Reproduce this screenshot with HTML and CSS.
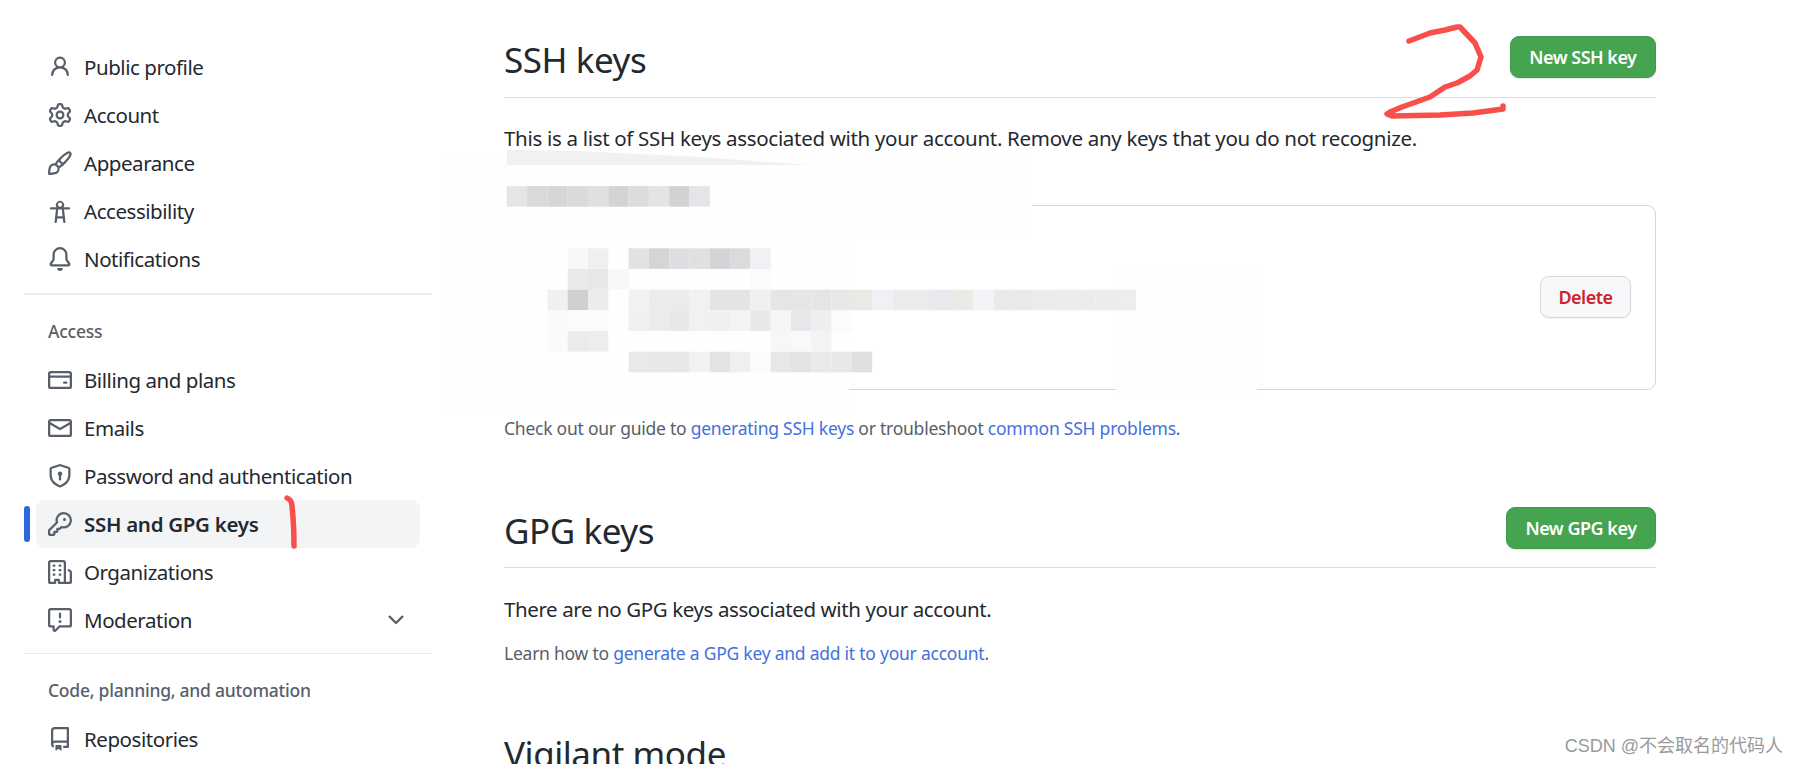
FILE: index.html
```html
<!DOCTYPE html>
<html lang="en">
<head>
<meta charset="utf-8">
<title>SSH and GPG keys</title>
<link rel="stylesheet" href="styles.css">
</head>
<body>
<div class="page">
  <nav class="sidebar">
    <ul class="menu">
      <li class="item"><svg class="icon" viewBox="0 0 16 16"><path d="M10.561 8.073a6.005 6.005 0 0 1 3.432 5.142.75.75 0 1 1-1.498.07 4.5 4.5 0 0 0-8.99 0 .75.75 0 1 1-1.498-.07 6.004 6.004 0 0 1 3.431-5.142 3.999 3.999 0 1 1 5.123 0ZM10.5 5a2.5 2.5 0 1 0-5 0 2.5 2.5 0 0 0 5 0Z"/></svg><span>Public profile</span></li>
      <li class="item"><svg class="icon" viewBox="0 0 16 16"><path d="M8 0a8.2 8.2 0 0 1 .701.031C9.444.095 9.99.645 10.16 1.29l.288 1.107c.018.066.079.158.212.224.231.114.454.243.668.386.123.082.233.09.299.071l1.103-.303c.644-.176 1.392.021 1.82.63.27.385.506.792.704 1.218.315.675.111 1.422-.364 1.891l-.814.806c-.049.048-.098.147-.088.294.016.257.016.515 0 .772-.01.147.038.246.088.294l.814.806c.475.469.679 1.216.364 1.891a7.977 7.977 0 0 1-.704 1.217c-.428.61-1.176.807-1.82.63l-1.102-.302c-.067-.019-.177-.011-.3.071a5.909 5.909 0 0 1-.668.386c-.133.066-.194.158-.211.224l-.29 1.106c-.168.646-.715 1.196-1.458 1.26a8.006 8.006 0 0 1-1.402 0c-.743-.064-1.289-.614-1.458-1.26l-.289-1.106c-.018-.066-.079-.158-.212-.224a5.738 5.738 0 0 1-.668-.386c-.123-.082-.233-.09-.299-.071l-1.103.303c-.644.176-1.392-.021-1.82-.63a8.12 8.12 0 0 1-.704-1.218c-.315-.675-.111-1.422.363-1.891l.815-.806c.05-.048.098-.147.088-.294a6.214 6.214 0 0 1 0-.772c.01-.147-.038-.246-.088-.294l-.815-.806C.635 6.045.431 5.298.746 4.623a7.92 7.92 0 0 1 .704-1.217c.428-.61 1.176-.807 1.82-.63l1.102.302c.067.019.177.011.3-.071.214-.143.437-.272.668-.386.133-.066.194-.158.211-.224l.29-1.106C6.009.645 6.556.095 7.299.03 7.53.01 7.764 0 8 0Zm-.571 1.525c-.036.003-.108.036-.137.146l-.289 1.105c-.147.561-.549.967-.998 1.189-.173.086-.34.183-.5.29-.417.278-.97.423-1.529.27l-1.103-.303c-.109-.03-.175.016-.195.045-.22.312-.412.644-.573.99-.014.031-.021.11.059.19l.815.806c.411.406.562.957.53 1.456a4.709 4.709 0 0 0 0 .582c.032.499-.119 1.05-.53 1.456l-.815.806c-.081.08-.073.159-.059.19.162.346.353.677.573.989.02.03.085.076.195.046l1.102-.303c.56-.153 1.113-.008 1.53.27.161.107.328.204.501.29.447.222.85.629.997 1.189l.289 1.105c.029.109.101.143.137.146a6.6 6.6 0 0 0 1.142 0c.036-.003.108-.036.137-.146l.289-1.105c.147-.561.549-.967.998-1.189.173-.086.34-.183.5-.29.417-.278.97-.423 1.529-.27l1.103.303c.109.029.175-.016.195-.045.22-.313.411-.644.573-.99.014-.031.021-.11-.059-.19l-.815-.806c-.411-.406-.562-.957-.53-1.456a4.709 4.709 0 0 0 0-.582c-.032-.499.119-1.05.53-1.456l.815-.806c.081-.08.073-.159.059-.19a6.464 6.464 0 0 0-.573-.989c-.02-.03-.085-.076-.195-.046l-1.102.303c-.56.153-1.113.008-1.53-.27a4.44 4.44 0 0 0-.501-.29c-.447-.222-.85-.629-.997-1.189l-.289-1.105c-.029-.11-.101-.143-.137-.146a6.6 6.6 0 0 0-1.142 0ZM11 8a3 3 0 1 1-6 0 3 3 0 0 1 6 0ZM9.5 8a1.5 1.5 0 1 0-3.001.001A1.5 1.5 0 0 0 9.5 8Z"/></svg><span>Account</span></li>
      <li class="item"><svg class="icon" viewBox="0 0 16 16"><path d="M11.134 1.535c.7-.509 1.416-.942 2.076-1.155.649-.21 1.463-.267 2.069.34.603.601.568 1.411.368 2.07-.202.668-.624 1.39-1.125 2.096-1.011 1.424-2.496 2.987-3.775 4.249-1.098 1.084-2.132 1.839-3.04 2.3a3.744 3.744 0 0 1-1.055 3.217c-.431.431-1.065.691-1.657.861-.614.177-1.294.287-1.914.357A21.151 21.151 0 0 1 .797 16H.743l.007-.75H.749L.742 16a.75.75 0 0 1-.743-.742l.743-.008-.742.007v-.054a21.25 21.25 0 0 1 .13-2.284c.067-.647.187-1.287.358-1.914.17-.591.43-1.226.86-1.657a3.746 3.746 0 0 1 3.227-1.054c.466-.893 1.225-1.907 2.314-2.982 1.271-1.255 2.833-2.75 4.245-3.777ZM1.62 13.089c-.051.464-.086.929-.104 1.395.466-.018.932-.053 1.396-.104a10.511 10.511 0 0 0 1.668-.309c.526-.151.856-.325 1.011-.48a2.25 2.25 0 1 0-3.182-3.182c-.155.155-.329.485-.48 1.01a10.515 10.515 0 0 0-.309 1.67Zm10.396-10.34c-1.224.89-2.605 2.189-3.822 3.384l1.718 1.718c1.21-1.205 2.51-2.597 3.387-3.833.47-.662.78-1.227.912-1.662.134-.444.032-.551.009-.575h-.001V1.78c-.014-.014-.113-.113-.548.027-.432.14-.995.462-1.655.942Zm-4.832 7.266-.001.001a9.859 9.859 0 0 0 1.63-1.142L7.155 7.216a9.7 9.7 0 0 0-1.161 1.607c.482.302.889.71 1.19 1.192Z"/></svg><span>Appearance</span></li>
      <li class="item"><svg class="icon" viewBox="0 0 16 16"><path fill-rule="evenodd" d="M10.3 5.5H14a.75.75 0 0 1 0 1.5h-3.3l.94 8.16a.75.75 0 0 1-1.49.18L9.8 13H6.2l-.35 2.34a.75.75 0 0 1-1.49-.18L5.3 7H2a.75.75 0 0 1 0-1.5h3.7A2.75 2.75 0 1 1 10.3 5.5ZM8 5.1a1.35 1.35 0 1 0 0-2.7 1.35 1.35 0 0 0 0 2.7ZM6.75 7l-.4 4.5h3.3L9.25 7Z"/></svg><span>Accessibility</span></li>
      <li class="item"><svg class="icon" viewBox="0 0 16 16"><path d="M8 16c.9 0 1.7-.6 1.9-1.5.1-.3-.1-.5-.4-.5h-3c-.3 0-.5.2-.4.5.2.9 1 1.5 1.9 1.5ZM3 5a5 5 0 0 1 10 0v2.947c0 .05.015.098.042.139l1.703 2.555A1.519 1.519 0 0 1 13.482 13H2.518a1.516 1.516 0 0 1-1.263-2.36l1.703-2.554A.255.255 0 0 0 3 7.947Zm5-3.5A3.5 3.5 0 0 0 4.5 5v2.947c0 .346-.102.683-.294.97l-1.703 2.556a.017.017 0 0 0-.003.01l.001.006c0 .002.002.004.004.006l.006.004.007.001h10.964l.007-.001.006-.004.004-.006.001-.007a.017.017 0 0 0-.003-.01l-1.703-2.554a1.745 1.745 0 0 1-.294-.97V5A3.5 3.5 0 0 0 8 1.5Z"/></svg><span>Notifications</span></li>
    </ul>
    <hr class="rule">
    <h3 class="label">Access</h3>
    <ul class="menu">
      <li class="item"><svg class="icon" viewBox="0 0 16 16"><path d="M10.75 9a.75.75 0 0 0 0 1.5h1.5a.75.75 0 0 0 0-1.5h-1.5ZM0 3.75C0 2.784.784 2 1.75 2h12.5c.966 0 1.75.784 1.75 1.75v8.5A1.75 1.75 0 0 1 14.25 14H1.75A1.75 1.75 0 0 1 0 12.25ZM14.5 6.5h-13v5.75c0 .138.112.25.25.25h12.5a.25.25 0 0 0 .25-.25Zm0-2.75a.25.25 0 0 0-.25-.25H1.75a.25.25 0 0 0-.25.25V5h13Z"/></svg><span>Billing and plans</span></li>
      <li class="item"><svg class="icon" viewBox="0 0 16 16"><path d="M1.75 2h12.5c.966 0 1.75.784 1.75 1.75v8.5A1.75 1.75 0 0 1 14.25 14H1.75A1.75 1.75 0 0 1 0 12.25v-8.5C0 2.784.784 2 1.75 2ZM1.5 12.251c0 .138.112.25.25.25h12.5a.25.25 0 0 0 .25-.25V5.809L8.38 9.397a.75.75 0 0 1-.76 0L1.5 5.809v6.442Zm13-8.181v-.32a.25.25 0 0 0-.25-.25H1.75a.25.25 0 0 0-.25.25v.32L8 7.88Z"/></svg><span>Emails</span></li>
      <li class="item"><svg class="icon" viewBox="0 0 16 16"><path d="m8.533.133 5.25 1.68A1.75 1.75 0 0 1 15 3.48V7c0 1.566-.32 3.182-1.303 4.682-.983 1.498-2.585 2.813-5.032 3.855a1.697 1.697 0 0 1-1.33 0c-2.447-1.042-4.049-2.357-5.032-3.855C1.32 10.182 1 8.566 1 7V3.48a1.75 1.75 0 0 1 1.217-1.667l5.25-1.68a1.748 1.748 0 0 1 1.066 0Zm-.61 1.429.001.001-5.25 1.68a.251.251 0 0 0-.174.237V7c0 1.36.275 2.666 1.057 3.859.784 1.194 2.121 2.342 4.366 3.298a.196.196 0 0 0 .154 0c2.245-.957 3.582-2.103 4.366-3.297C13.225 9.666 13.5 8.358 13.5 7V3.48a.25.25 0 0 0-.174-.238l-5.25-1.68a.25.25 0 0 0-.153 0ZM9.5 6.5c0 .536-.286 1.032-.75 1.3v2.45a.75.75 0 0 1-1.5 0V7.8A1.5 1.5 0 1 1 9.5 6.5Z"/></svg><span>Password and authentication</span></li>
      <li class="item active"><svg class="icon" viewBox="0 0 16 16"><path d="M10.5 0a5.499 5.499 0 1 1-1.288 10.848l-.932.932a.749.749 0 0 1-.53.22H7v.75a.749.749 0 0 1-.22.53l-.5.5a.749.749 0 0 1-.53.22H5v.75a.749.749 0 0 1-.22.53l-.5.5a.749.749 0 0 1-.53.22h-2A1.75 1.75 0 0 1 0 14.25v-2c0-.199.079-.389.22-.53l4.932-4.932A5.5 5.5 0 0 1 10.5 0Zm-4 5.5c-.001.431.069.86.205 1.269a.75.75 0 0 1-.181.768L1.5 12.56v1.69c0 .138.112.25.25.25h1.69l.06-.06v-1.19a.75.75 0 0 1 .75-.75h1.19l.06-.06v-1.19a.75.75 0 0 1 .75-.75h1.19l1.023-1.025a.75.75 0 0 1 .768-.18A4 4 0 1 0 6.5 5.5ZM11 6a1 1 0 1 1 0-2 1 1 0 0 1 0 2Z"/></svg><span>SSH and GPG keys</span></li>
      <li class="item"><svg class="icon" viewBox="0 0 16 16"><path d="M1.75 16A1.75 1.75 0 0 1 0 14.25V1.75C0 .784.784 0 1.75 0h8.5C11.216 0 12 .784 12 1.75v12.5c0 .085-.006.168-.018.25h2.268a.25.25 0 0 0 .25-.25V8.285a.25.25 0 0 0-.111-.208l-1.055-.703a.749.749 0 1 1 .832-1.248l1.055.703c.487.325.779.871.779 1.456v5.965A1.75 1.75 0 0 1 14.25 16h-3.5a.766.766 0 0 1-.197-.026c-.099.017-.2.026-.303.026h-3a.75.75 0 0 1-.75-.75V14h-1v1.25a.75.75 0 0 1-.75.75Zm-.25-1.75c0 .138.112.25.25.25H4v-1.25a.75.75 0 0 1 .75-.75h2.5a.75.75 0 0 1 .75.75v1.25h2.25a.25.25 0 0 0 .25-.25V1.75a.25.25 0 0 0-.25-.25h-8.5a.25.25 0 0 0-.25.25ZM3.75 6h.5a.75.75 0 0 1 0 1.5h-.5a.75.75 0 0 1 0-1.5ZM3 3.75A.75.75 0 0 1 3.75 3h.5a.75.75 0 0 1 0 1.5h-.5A.75.75 0 0 1 3 3.75Zm4 3A.75.75 0 0 1 7.75 6h.5a.75.75 0 0 1 0 1.5h-.5A.75.75 0 0 1 7 6.75ZM7.75 3h.5a.75.75 0 0 1 0 1.5h-.5a.75.75 0 0 1 0-1.5ZM3 9.75A.75.75 0 0 1 3.75 9h.5a.75.75 0 0 1 0 1.5h-.5A.75.75 0 0 1 3 9.75ZM7.75 9h.5a.75.75 0 0 1 0 1.5h-.5a.75.75 0 0 1 0-1.5Z"/></svg><span>Organizations</span></li>
      <li class="item"><svg class="icon" viewBox="0 0 16 16"><path d="M0 1.75C0 .784.784 0 1.75 0h12.5C15.216 0 16 .784 16 1.75v9.5A1.75 1.75 0 0 1 14.25 13H8.06l-2.573 2.573A1.458 1.458 0 0 1 3 14.543V13H1.75A1.75 1.75 0 0 1 0 11.25Zm1.75-.25a.25.25 0 0 0-.25.25v9.5c0 .138.112.25.25.25h2a.75.75 0 0 1 .75.75v2.19l2.72-2.72a.749.749 0 0 1 .53-.22h6.5a.25.25 0 0 0 .25-.25v-9.5a.25.25 0 0 0-.25-.25Zm7 2.25v2.5a.75.75 0 0 1-1.5 0v-2.5a.75.75 0 0 1 1.5 0ZM9 9a1 1 0 1 1-2 0 1 1 0 0 1 2 0Z"/></svg><span>Moderation</span><svg class="icon chevron" viewBox="0 0 16 16"><path d="M12.78 5.22a.749.749 0 0 1 0 1.06l-4.25 4.25a.749.749 0 0 1-1.06 0L3.22 6.28a.749.749 0 1 1 1.06-1.06L8 8.939l3.72-3.719a.749.749 0 0 1 1.06 0Z"/></svg></li>
    </ul>
    <hr class="rule tight">
    <h3 class="label">Code, planning, and automation</h3>
    <ul class="menu">
      <li class="item"><svg class="icon" viewBox="0 0 16 16"><path d="M2 2.5A2.5 2.5 0 0 1 4.5 0h8.75a.75.75 0 0 1 .75.75v12.5a.75.75 0 0 1-.75.75h-2.5a.75.75 0 0 1 0-1.5h1.75v-2h-8a1 1 0 0 0-.714 1.7.75.75 0 1 1-1.072 1.05A2.495 2.495 0 0 1 2 11.5Zm10.5-1h-8a1 1 0 0 0-1 1v6.708A2.486 2.486 0 0 1 4.5 9h8ZM5 12.25a.25.25 0 0 1 .25-.25h3.5a.25.25 0 0 1 .25.25v3.25a.25.25 0 0 1-.4.2l-1.45-1.087a.249.249 0 0 0-.3 0L5.4 15.7a.25.25 0 0 1-.4-.2Z"/></svg><span>Repositories</span></li>
    </ul>
  </nav>

  <main class="content">
    <section class="ssh">
      <header class="head">
        <h2 class="title">SSH keys</h2>
        <button class="btn primary">New SSH key</button>
      </header>
      <p class="lead">This is a list of SSH keys associated with your account. Remove any keys that you do not recognize.</p>
      <div class="keycard">
        <button class="btn danger">Delete</button>
      </div>
      <p class="note">Check out our guide to <a href="#">generating SSH keys</a> or troubleshoot <a href="#">common SSH problems</a>.</p>
    </section>
    <section class="gpg">
      <header class="head">
        <h2 class="title">GPG keys</h2>
        <button class="btn primary">New GPG key</button>
      </header>
      <p class="lead-gpg">There are no GPG keys associated with your account.</p>
      <p class="note-gpg">Learn how to <a href="#">generate a GPG key and add it to your account</a>.</p>
    </section>
    <section class="vigilant">
      <h2 class="title">Vigilant mode</h2>
    </section>
  </main>
</div>

<svg class="overlay" viewBox="0 0 1799 764">
  <g class="masks">
    <rect x="442" y="152" width="62" height="262" fill="#fefefe"/>
    <rect x="500" y="152" width="532" height="78" fill="#fefefe"/>
    <rect x="500" y="230" width="349" height="183" fill="#fefefe"/>
    <rect x="849" y="230" width="183" height="4" fill="#fefefe"/>
    <rect x="1116" y="267" width="141" height="127" fill="#fefefe"/>
  </g>
  <polygon fill="#f1f1f1" points="507,150 577,151 700,157 810,165 507,165"/>
  <g class="mosaic" transform="translate(506.8 0)">
    <rect x="0" y="186.1" fill="#e5e5e3"/><rect x="20.3" y="186.1" fill="#d9d9d9"/><rect x="40.6" y="186.1" fill="#d4d6d8"/><rect x="60.9" y="186.1" fill="#d9dbda"/><rect x="81.2" y="186.1" fill="#e0e0e0"/><rect x="101.5" y="186.1" fill="#d2d4d3"/><rect x="121.8" y="186.1" fill="#dcdcdc"/><rect x="142.1" y="186.1" fill="#e4e4e2"/><rect x="162.4" y="186.1" fill="#d2d2d2"/><rect x="182.7" y="186.1" fill="#e3e5e8"/>

    <rect x="60.9" y="248.3" fill="#f8f8f8"/><rect x="81.2" y="248.3" fill="#efefef"/><rect x="121.8" y="248.3" fill="#e4e2e0"/><rect x="142.1" y="248.3" fill="#d5d5d8"/><rect x="162.4" y="248.3" fill="#dcdee2"/><rect x="182.7" y="248.3" fill="#e2e0de"/><rect x="203" y="248.3" fill="#d3d4d7"/><rect x="223.3" y="248.3" fill="#dbdbdb"/><rect x="243.6" y="248.3" fill="#f0f1f5"/>

    <rect x="60.9" y="269" fill="#e8eae8"/><rect x="81.2" y="269" fill="#e6e8e6"/><rect x="101.5" y="269" fill="#f7f7f7"/><rect x="243.6" y="269" fill="#fbfbfb"/>

    <rect x="40.6" y="289.7" fill="#f0f0f0"/><rect x="60.9" y="289.7" fill="#d0d0d0"/><rect x="81.2" y="289.7" fill="#ececec"/><rect x="121.8" y="289.7" fill="#f2f2f2"/><rect x="142.1" y="289.7" fill="#ebebeb"/><rect x="162.4" y="289.7" fill="#ebebeb"/><rect x="182.7" y="289.7" fill="#f1f1f1"/><rect x="203" y="289.7" fill="#e4e4e4"/><rect x="223.3" y="289.7" fill="#e4e4e4"/><rect x="243.6" y="289.7" fill="#f0f0f0"/><rect x="263.9" y="289.7" fill="#e5e5e5"/><rect x="284.2" y="289.7" fill="#e6e6e6"/><rect x="304.5" y="289.7" fill="#e5e5e5"/><rect x="324.8" y="289.7" fill="#e7e8ea"/><rect x="345.1" y="289.7" fill="#ebe9e6"/><rect x="365.4" y="289.7" fill="#f0f1f4"/><rect x="385.7" y="289.7" fill="#ebebeb"/><rect x="406" y="289.7" fill="#ebebeb"/><rect x="426.3" y="289.7" fill="#e8e9ec"/><rect x="446.6" y="289.7" fill="#ebeae6"/><rect x="466.9" y="289.7" fill="#f3f4f7"/><rect x="487.2" y="289.7" fill="#e9eaea"/><rect x="507.5" y="289.7" fill="#e8eaec"/><rect x="527.8" y="289.7" fill="#e9ebed"/><rect x="548.1" y="289.7" fill="#ebeceb"/><rect x="568.4" y="289.7" fill="#ecedea"/><rect x="588.7" y="289.7" fill="#ebeceb"/><rect x="609" y="289.7" fill="#eceeec"/>

    <rect x="40.6" y="310.3" fill="#fafafa"/><rect x="60.9" y="310.3" fill="#fbfbfb"/><rect x="81.2" y="310.3" fill="#fbfbfb"/><rect x="121.8" y="310.3" fill="#f0f0f0"/><rect x="142.1" y="310.3" fill="#ebebeb"/><rect x="162.4" y="310.3" fill="#e8e8e8"/><rect x="182.7" y="310.3" fill="#f1f1f1"/><rect x="203" y="310.3" fill="#f0f0f0"/><rect x="223.3" y="310.3" fill="#f3f3f3"/><rect x="243.6" y="310.3" fill="#e8e8e8"/><rect x="263.9" y="310.3" fill="#f5f5f5"/><rect x="284.2" y="310.3" fill="#e6e7ea"/><rect x="304.5" y="310.3" fill="#eeeeee"/><rect x="324.8" y="310.3" fill="#fbfbfb"/>

    <rect x="40.6" y="331" fill="#fafafa"/><rect x="60.9" y="331" fill="#ebebeb"/><rect x="81.2" y="331" fill="#ededed"/><rect x="263.9" y="331" fill="#f7f7f7"/><rect x="284.2" y="331" fill="#f9f9f9"/><rect x="304.5" y="331" fill="#f3f3f3"/>

    <rect x="121.8" y="351.7" fill="#e9e9eb"/><rect x="142.1" y="351.7" fill="#e8e8e8"/><rect x="162.4" y="351.7" fill="#e7e7e7"/><rect x="182.7" y="351.7" fill="#f2f2f2"/><rect x="203" y="351.7" fill="#e3e3e3"/><rect x="223.3" y="351.7" fill="#efefef"/><rect x="243.6" y="351.7" fill="#fbfbfb"/><rect x="263.9" y="351.7" fill="#e7e7e7"/><rect x="284.2" y="351.7" fill="#e3e3e3"/><rect x="304.5" y="351.7" fill="#e9e9e9"/><rect x="324.8" y="351.7" fill="#e8e8e8"/><rect x="345.1" y="351.7" fill="#e0e0e0"/>
  </g>
  <g class="scribble">
    <path d="M287 498 Q292 500 292 506 L293 517 Q294 530 294 546"/>
    <path d="M1409 41 L1430 33 L1445 30 L1457 27 L1460 27 L1475 43 L1481 57 L1477 70 L1470 76 L1457 83 L1445 87 L1430 97 L1402 107 L1390 112 L1387 114 L1392 116 L1440 115 L1473 113 L1503 109 L1503 106"/>
  </g>
</svg>
<div class="watermark">CSDN @不会取名的代码人</div>
</body>
</html>
```

FILE: styles.css
```css
* { box-sizing: border-box; }
html, body { margin: 0; padding: 0; height: 764px; overflow: hidden; background: #fff; }
body {
  position: relative;
  font-family: "Noto Sans", "Open Sans", sans-serif;
  font-size: 20.5px;
  color: #24292f;
}
.page { display: grid; grid-template-columns: 504px 1152px; height: 764px; overflow: hidden; }

.sidebar { padding: 43px 0 0 24px; width: 432px; }
.menu { list-style: none; margin: 0; padding: 0; }
.item {
  position: relative;
  display: flex;
  align-items: center;
  gap: 12px;
  height: 48px;
  margin-left: 12px;
  width: 384px;
  padding: 0 12px;
  border-radius: 9px;
  letter-spacing: -0.45px;
}
.item.active { background: #f3f4f6; font-weight: 600; letter-spacing: -0.3px; }
.item.active::before {
  content: "";
  position: absolute;
  left: -12px;
  top: 6px;
  width: 6px;
  height: 36px;
  border-radius: 6px;
  background: #2f66d8;
}
.icon { width: 24px; height: 24px; fill: #57606a; flex: none; }
.chevron { margin-left: auto; }

.rule { border: 0; height: 1.5px; background: #e8eaed; margin: 10px 0 0; }
.rule.tight { margin-top: 9px; }
.label {
  margin: 0;
  height: 61px;
  padding: 11px 0 0 24px;
  display: flex;
  align-items: center;
  font-size: 17.5px;
  font-weight: 500;
  color: #57606a;
  letter-spacing: -0.24px;
}

.content { position: relative; padding-top: 36px; }
.head {
  display: flex;
  justify-content: space-between;
  align-items: flex-start;
  height: 61.5px;
  border-bottom: 1.5px solid #dcdcdc;
}
.title { margin: 0; font-size: 35px; font-weight: 400; line-height: 48px; letter-spacing: -0.45px; }
.btn {
  height: 42px;
  padding: 0 18.5px;
  border-radius: 9px;
  font: 600 18px "Noto Sans", sans-serif;
  letter-spacing: -0.5px;
}
.primary { background: #44a44f; color: #fff; border: 1.5px solid #3f9a4a; box-shadow: 0 1px 1px rgba(27,31,36,.1); }
.danger { width: 91px; padding: 0; background: #f6f8fa; color: #cf222e; border: 1.5px solid #d5d7dc; box-shadow: 0 1px 1px rgba(27,31,36,.06); }

.lead { margin: 0; padding-top: 24px; line-height: 32px; letter-spacing: -0.31px; }
.keycard {
  margin-top: 51px;
  height: 185px;
  border: 1.5px solid #d0d7de;
  border-radius: 9px;
  display: flex;
  align-items: center;
  justify-content: flex-end;
  padding-right: 24px;
}
.note { margin: 25px 0 0; font-size: 17.5px; line-height: 27px; color: #57606a; letter-spacing: -0.24px; }
.note a, .note-gpg a { color: #4570e0; text-decoration: none; }

.gpg { margin-top: 65px; }
.lead-gpg { margin: 0; padding-top: 25px; line-height: 32px; letter-spacing: -0.4px; }
.note-gpg { margin: 15px 0 0; font-size: 17.5px; line-height: 27px; color: #57606a; letter-spacing: -0.24px; }
.vigilant { margin-top: 63px; }

.overlay { position: absolute; left: 0; top: 0; width: 1799px; height: 764px; pointer-events: none; }
.mosaic rect { width: 20.3px; height: 20.6px; }
.scribble path { fill: none; stroke: #f94f4b; stroke-width: 5.5; stroke-linecap: round; stroke-linejoin: round; }

.watermark {
  position: absolute;
  right: 16px;
  top: 731px;
  font: 18px "Liberation Sans", "Noto Sans CJK SC", sans-serif;
  color: #9a9a9a;
}
```
